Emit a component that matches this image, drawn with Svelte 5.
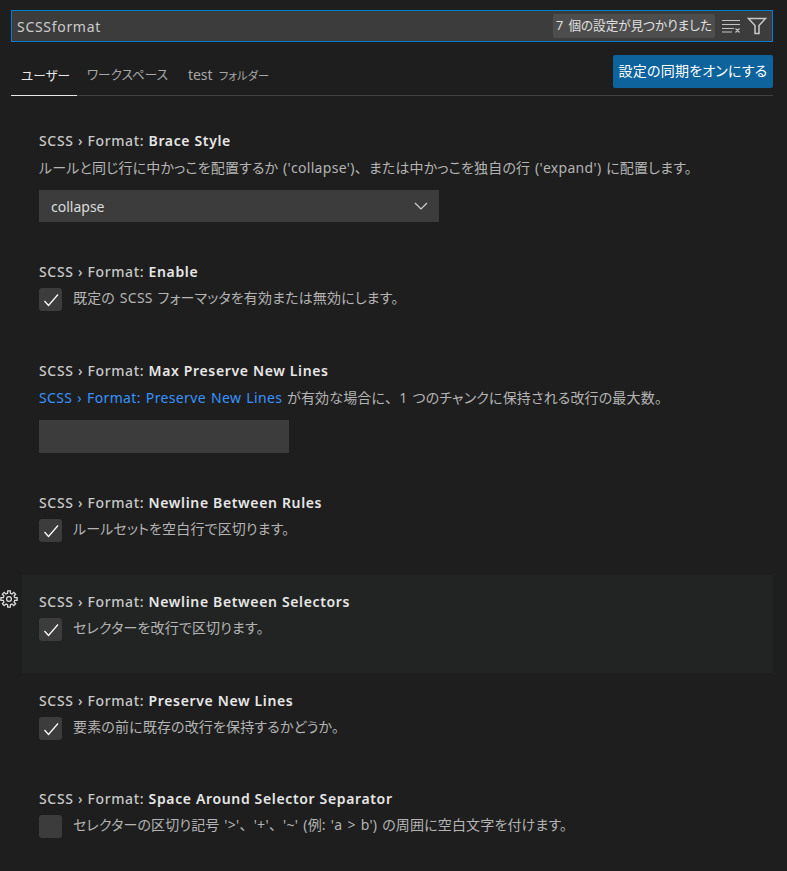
<script>
  const items = [
    { bold: 'Brace Style', kind: 'select', desc: "ルールと同じ行に中かっこを配置するか ('collapse')、または中かっこを独自の行 ('expand') に配置します。" },
    { bold: 'Enable', kind: 'check', on: true, desc: '既定の SCSS フォーマッタを有効または無効にします。' },
    { bold: 'Max Preserve New Lines', kind: 'input', link: 'SCSS › Format: Preserve New Lines', desc: ' が有効な場合に、1 つのチャンクに保持される改行の最大数。' },
    { bold: 'Newline Between Rules', kind: 'check', on: true, desc: 'ルールセットを空白行で区切ります。' },
    { bold: 'Newline Between Selectors', kind: 'check', on: true, hl: true, desc: 'セレクターを改行で区切ります。' },
    { bold: 'Preserve New Lines', kind: 'check', on: true, short: true, desc: '要素の前に既存の改行を保持するかどうか。' },
    { bold: 'Space Around Selector Separator', kind: 'check', on: false, desc: "セレクターの区切り記号 '>'、'+'、'~' (例: 'a > b') の周囲に空白文字を付けます。" }
  ];

  // Split a description so Latin runs and the ideographic comma can be spaced on their own.
  function parts(text) {
    return text.split(/([\x21-\x7e]+(?: [\x21-\x7e]+)*|、)/).filter(Boolean).map((t) => ({
      t,
      cls: t === '、' ? 'full' : /^[\x21-\x7e]/.test(t) ? 'lat' : ''
    }));
  }

  // Eight-toothed cog outline.
  function gearPath() {
    const pts = [];
    const pt = (r, deg) => {
      const a = (deg * Math.PI) / 180;
      return `${(9 + r * Math.cos(a)).toFixed(2)} ${(9 + r * Math.sin(a)).toFixed(2)}`;
    };
    for (let i = 0; i < 8; i++) {
      const c = i * 45 - 90;
      pts.push(pt(5.9, c - 14), pt(8.2, c - 9), pt(8.2, c + 9), pt(5.9, c + 14));
    }
    return 'M' + pts.join('L') + 'Z';
  }
  const gear = gearPath();
</script>

<div class="page">
  <div class="search">
    <span class="query">SCSSformat</span>
    <span class="count">7 個の設定が見つかりました</span>
    <svg class="ico" width="20" height="16" viewBox="0 0 20 16" fill="none" stroke="#c4c4c4" stroke-width="1.2">
      <path d="M1 2.500h18M1 6.500h18M1 10.500h12M1 14h10M14.500 10.500l4 4M18.500 10.500l-4 4" />
    </svg>
    <svg class="ico" width="20" height="18" viewBox="0 0 20 18" fill="none" stroke="#c8c8c8" stroke-width="1.5">
      <path d="M1.500 1.500h17l-6.500 7v8h-4v-8z" />
    </svg>
  </div>

  <div class="tabs">
    <span class="tab active">ユーザー</span>
    <span class="tab">ワークスペース</span>
    <span class="tab"><span class="tname">test</span> <small>フォルダー</small></span>
    <button class="sync">設定の同期をオンにする</button>
  </div>

  <div class="list">
    {#each items as item}
      <section class="item" class:hl={item.hl} class:short={item.short} class:select-item={item.kind === 'select'} class:input-item={item.kind === 'input'}>
        {#if item.hl}
          <svg class="gear" width="18" height="18" viewBox="0 0 18 18" fill="none" stroke="#dcdcdc" stroke-width="1.3">
            <path d={gear} />
            <circle cx="9" cy="9" r="2.4" />
          </svg>
        {/if}
        <div class="title">SCSS › Format: <b>{item.bold}</b></div>
        {#if item.kind === 'check'}
          <div class="row">
            <span class="box">
              {#if item.on}
                <svg width="22" height="22" viewBox="0 0 22 22" fill="none" stroke="#fff" stroke-width="1.2">
                  <path d="M4.500 12l4 4.500L18 5.500" />
                </svg>
              {/if}
            </span>
            <span class="desc">{#each parts(item.desc) as p}<span class={p.cls}>{p.t}</span>{/each}</span>
          </div>
        {:else}
          <div class="desc">{#if item.link}<span class="link">{item.link}</span>{/if}{#each parts(item.desc) as p}<span class={p.cls}>{p.t}</span>{/each}</div>
          {#if item.kind === 'select'}
            <div class="select">
              <span>collapse</span>
              <svg width="16" height="16" viewBox="0 0 16 16" fill="none" stroke="#d0d0d0" stroke-width="1.2">
                <path d="M2 5l6 6 6-6" />
              </svg>
            </div>
          {:else}
            <div class="input"></div>
          {/if}
        {/if}
      </section>
    {/each}
  </div>
</div>

<style>
  :global(body) {
    margin: 0;
    background: #1e1e1e;
  }
  .page {
    width: 787px;
    height: 871px;
    overflow: hidden;
    background: #1e1e1e;
    color: #ccc;
    font-family: "Noto Sans", "Noto Sans CJK JP", sans-serif;
    font-feature-settings: "palt";
    font-size: 13px;
    box-sizing: border-box;
    padding-top: 10px;
  }
  .search {
    margin: 0 14px 0 11px;
    height: 32px;
    box-sizing: border-box;
    border: 1px solid #007fd4;
    background: #3c3c3c;
    display: flex;
    align-items: center;
    padding: 0 5px;
    gap: 6px;
  }
  .query {
    flex: 1;
    font-size: 14px;
    letter-spacing: 0.7px;
    padding-top: 1px;
    color: #ccc;
  }
  .count {
    background: #4d4d4d;
    border-radius: 2px;
    padding: 0 3px;
    height: 24px;
    line-height: 24px;
    font-size: 12.600px;
    word-spacing: 2px;
    color: #e0e0e0;
  }
  .ico {
    flex: none;
    display: block;
  }
  .tabs {
    margin: 13px 14px 0 11px;
    height: 41px;
    box-sizing: border-box;
    border-bottom: 1px solid #3f3f3f;
    display: flex;
    align-items: flex-end;
    position: relative;
  }
  .tab {
    height: 40px;
    line-height: 40px;
    font-size: 12.600px;
    padding: 0 10px;
    color: #a8a8a8;
    white-space: nowrap;
    box-sizing: border-box;
    word-spacing: 3px;
  }
  .tname {
    font-size: 14px;
  }
  .tab small {
    font-size: 11.300px;
  }
  .tab.active {
    color: #e7e7e7;
    border-bottom: 1px solid #e7e7e7;
    margin-bottom: -1px;
    width: 66px;
  }
  .sync {
    position: absolute;
    right: 0;
    top: 0;
    height: 33px;
    width: 160px;
    padding: 0 0 3px;
    border: 0;
    border-radius: 2px;
    background: #0e639c;
    color: #fff;
    font: inherit;
    font-feature-settings: "palt";
    font-size: 14px;
    letter-spacing: 0.2px;
  }
  .list {
    margin-top: 19px;
    margin-right: 14px;
    margin-left: 22px;
  }
  .item {
    height: 99px;
    box-sizing: border-box;
    padding: 17px 0 0 17px;
    position: relative;
  }
  .item.select-item {
    height: 131px;
  }
  .item.input-item {
    height: 132px;
  }
  .item.short {
    height: 98px;
  }
  .item.hl {
    background: #222424;
    height: 98px;
    margin-top: -1px;
    margin-bottom: 2px;
    padding-top: 18px;
  }
  .gear {
    position: absolute;
    left: -22px;
    top: 15px;
  }
  .title {
    height: 18px;
    line-height: 18px;
    font-size: 14px;
    letter-spacing: 0.65px;
    color: #c8c8c8;
    white-space: nowrap;
    font-weight: 500;
  }
  .title b {
    color: #e7e7e7;
    font-weight: 600;
  }
  .desc {
    white-space: nowrap;
    line-height: 18px;
    color: #b4b4b4;
    font-size: 14px;
    word-spacing: 1px;
    letter-spacing: 0.15px;
    position: relative;
    top: -2px;
  }
  .lat {
    letter-spacing: 0.3px;
  }
  .full {
    font-feature-settings: normal;
  }
  .select-item .desc,
  .input-item .desc {
    margin-top: 9px;
    top: 0;
  }
  .link {
    color: #3794ff;
    letter-spacing: 0.36px;
  }
  .row {
    display: flex;
    align-items: center;
    margin-top: 7px;
    gap: 11px;
  }
  .box {
    width: 23px;
    height: 23px;
    border-radius: 3px;
    background: #3c3c3c;
    display: flex;
    align-items: center;
    justify-content: center;
    flex: none;
  }
  .select {
    margin-top: 13px;
    width: 400px;
    height: 32px;
    background: #3c3c3c;
    display: flex;
    align-items: center;
    justify-content: space-between;
    box-sizing: border-box;
    padding: 0 10px 0 12px;
    font-size: 14px;
    color: #ddd;
  }
  .input {
    margin-top: 13px;
    width: 250px;
    height: 33px;
    background: #3c3c3c;
  }
</style>
